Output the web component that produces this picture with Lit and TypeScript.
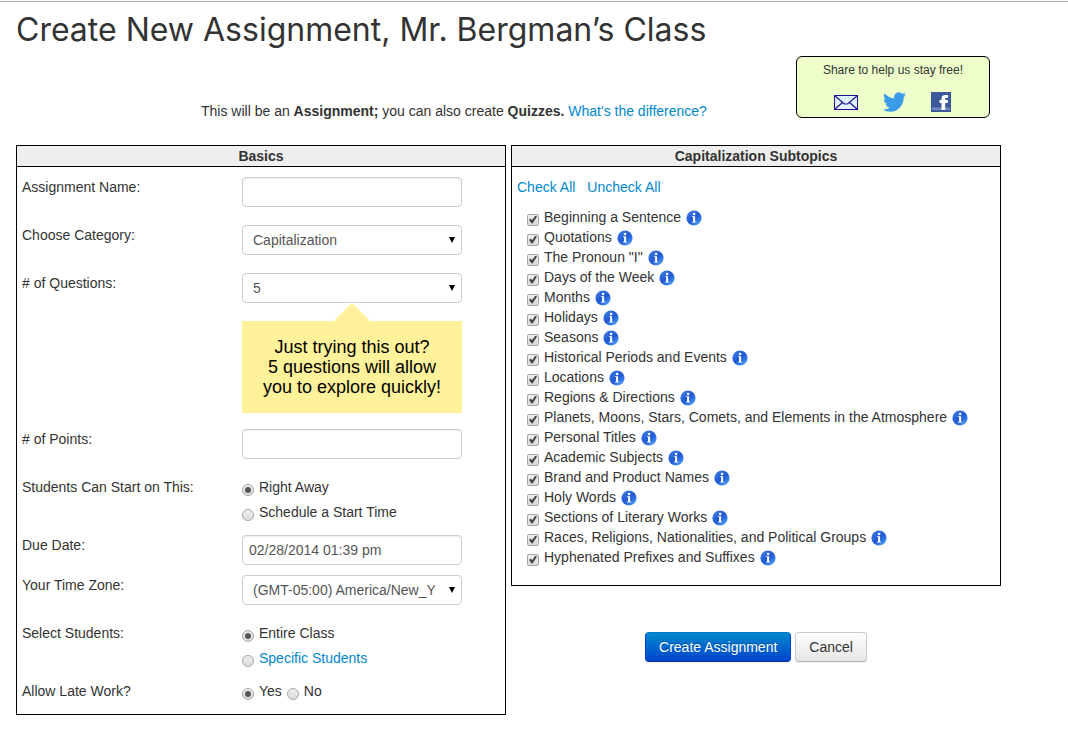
import { LitElement, html, css } from "lit";
import { customElement, property, state } from "lit/decorators.js";

const SUBTOPICS = [
  "Beginning a Sentence",
  "Quotations",
  'The Pronoun "I"',
  "Days of the Week",
  "Months",
  "Holidays",
  "Seasons",
  "Historical Periods and Events",
  "Locations",
  "Regions & Directions",
  "Planets, Moons, Stars, Comets, and Elements in the Atmosphere",
  "Personal Titles",
  "Academic Subjects",
  "Brand and Product Names",
  "Holy Words",
  "Sections of Literary Works",
  "Races, Religions, Nationalities, and Political Groups",
  "Hyphenated Prefixes and Suffixes",
];

const shared = css`
  *,
  *::before,
  *::after {
    box-sizing: border-box;
  }
  a {
    color: #0088cc;
    text-decoration: none;
  }
  svg {
    display: block;
    flex: none;
  }
  input[type="radio"],
  input[type="checkbox"] {
    appearance: none;
    flex: none;
    width: 12px;
    height: 12px;
    margin: 5px 0 0;
    border: 1px solid #a6a6a6;
    background: linear-gradient(#eeeeee, #dcdcdc);
    display: grid;
    place-items: center;
  }
  input[type="radio"] {
    border-radius: 50%;
  }
  input[type="checkbox"] {
    border-radius: 2px;
  }
  input[type="radio"]:checked::before {
    content: "";
    width: 6px;
    height: 6px;
    border-radius: 50%;
    background: #555;
  }
  input[type="checkbox"]:checked::before {
    content: "";
    width: 8px;
    height: 8px;
    background: #444;
    clip-path: polygon(0 55%, 20% 38%, 38% 58%, 80% 0, 100% 14%, 44% 100%, 34% 100%);
  }
`;

@customElement("info-icon")
class InfoIcon extends LitElement {
  static styles = css`
    :host {
      display: block;
      flex: none;
      padding-top: 2px;
    }
    svg {
      display: block;
    }
  `;
  render() {
    return html`<svg width="16" height="16" viewBox="0 0 16 16" aria-hidden="true">
      <defs>
        <linearGradient id="g" x1="0.1" y1="0" x2="0.9" y2="1">
          <stop offset="0" stop-color="#3f7fe6" />
          <stop offset="0.5" stop-color="#2259d2" />
          <stop offset="0.7" stop-color="#2f74e4" />
          <stop offset="1" stop-color="#62b4fb" />
        </linearGradient>
      </defs>
      <circle cx="8" cy="8" r="7.6" fill="url(#g)" />
      <circle cx="8.1" cy="4" r="1.300" fill="#fff" />
      <path d="M6 6.3h3.1v5.400h1.100v.8H6v-.8h1.100V7.100H6z" fill="#fff" />
    </svg>`;
  }
}

@customElement("share-box")
class ShareBox extends LitElement {
  static styles = [
    shared,
    css`
      :host {
        display: block;
        border: 1px solid #000;
        border-radius: 6px;
        background: #eeffcc;
        padding: 3px 26px 5px;
        text-align: center;
      }
      .caption {
        font-size: 12px;
        line-height: 20px;
      }
      .icons {
        display: flex;
        justify-content: center;
        align-items: center;
        gap: 25px;
        padding-top: 12px;
      }
    `,
  ];
  render() {
    return html`
      <div class="caption">Share to help us stay free!</div>
      <div class="icons">
        <a href="#email" aria-label="Email">
          <svg width="24" height="20" viewBox="0 0 24 20">
            <rect x="0.5" y="3.5" width="23" height="14" fill="#dff3ff" stroke="#20109a" />
            <path
              d="M1 4l9.500 8h3L23 4M1 17l7.500-6.500M23 17l-7.500-6.500"
              fill="none"
              stroke="#20109a"
              stroke-width="1.200"
            />
          </svg>
        </a>
        <a href="#twitter" aria-label="Twitter">
          <svg width="23" height="20" viewBox="0 2 24 20" preserveAspectRatio="none">
            <path
              fill="#3b9be8"
              d="M23.953 4.570a10 10 0 01-2.825.775 4.958 4.958 0 002.163-2.723c-.951.555-2.005.959-3.127 1.184a4.920 4.920 0 00-8.384 4.482C7.690 8.095 4.067 6.130 1.640 3.162a4.822 4.822 0 00-.666 2.475c0 1.710.870 3.213 2.188 4.096a4.904 4.904 0 01-2.228-.616v.060a4.923 4.923 0 003.946 4.827 4.996 4.996 0 01-2.212.085 4.936 4.936 0 004.604 3.417 9.867 9.867 0 01-6.102 2.105c-.390 0-.779-.023-1.170-.067a13.995 13.995 0 007.557 2.209c9.053 0 13.998-7.496 13.998-13.985 0-.210 0-.420-.015-.630A9.935 9.935 0 0024 4.590z"
            />
          </svg>
        </a>
        <a href="#facebook" aria-label="Facebook">
          <svg width="20" height="20" viewBox="0 0 20 20">
            <rect width="20" height="20" fill="#3b5998" />
            <rect x="1" y="15.500" width="18" height="2.500" fill="#7189ba" />
            <path
              fill="#fff"
              d="M10.500 18v-7H8.500V8h2V6.500C10.500 4 12 3 14.200 3H17v3h-1.600c-.9 0-1.200.4-1.200 1.100V8H17l-.4 3h-2.400v7z"
            />
          </svg>
        </a>
      </div>
    `;
  }
}

@customElement("titled-panel")
class TitledPanel extends LitElement {
  @property() heading = "";
  static styles = css`
    :host {
      display: block;
      border: 1px solid #000;
    }
    h2 {
      margin: 0;
      font-size: 14px;
      line-height: 20px;
      text-align: center;
      background: #eee;
      border-bottom: 1px solid #000;
    }
  `;
  render() {
    return html`<h2>${this.heading}</h2>
      <slot></slot>`;
  }
}

@customElement("app-root")
class AppRoot extends LitElement {
  @state() private checked: boolean[] = SUBTOPICS.map(() => true);

  static styles = [
    shared,
    css`
      :host {
        display: block;
        font: 14px/20px "Liberation Sans", Arial, sans-serif;
        color: #333;
        background: #fff;
        padding-top: 1px;
      }
      .page {
        border-top: 1px solid #aaa;
        padding: 8px 16px 32px;
      }
      .content {
        max-width: 985px;
      }
      h1 {
        margin: 0 0 6px;
        font: 400 32px/40px Inter, "Liberation Sans", sans-serif;
      }
      .intro-row {
        display: flex;
        align-items: flex-start;
        padding-right: 11px;
        margin-bottom: 24px;
      }
      .intro {
        flex: 1;
        margin: 45px 0 0;
        padding-left: 96px;
        text-align: center;
      }
      .panels {
        display: grid;
        grid-template-columns: 1fr 1fr;
        gap: 5px;
        align-items: start;
      }
      .form {
        padding: 10px 5px 0;
      }
      .row {
        display: grid;
        grid-template-columns: 220px minmax(0, 220px);
        padding-bottom: 8px;
      }
      .row.tight {
        padding-bottom: 0;
      }
      .field {
        display: block;
        width: 100%;
        height: 30px;
        margin: 0 0 10px;
        border: 1px solid #ccc;
        border-radius: 4px;
        background-color: #fff;
        color: #555;
        font: inherit;
      }
      input.field {
        padding: 0 6px;
        box-shadow: inset 0 1px 1px rgba(0, 0, 0, 0.075);
      }
      select.field {
        appearance: none;
        padding: 0 26px 0 10px;
        background-image: url("data:image/svg+xml,%3Csvg xmlns='http://www.w3.org/2000/svg' width='6' height='6'%3E%3Cpath d='M0 0h6L3 6z'/%3E%3C/svg%3E");
        background-repeat: no-repeat;
        background-position: right 6px center;
      }
      .callout {
        margin: 18px 0 8px;
        padding: 16px 8px;
        background: #fff29b;
        color: #000;
        font-size: 18px;
        text-align: center;
        position: relative;
      }
      .callout::before {
        content: "";
        position: absolute;
        left: 50%;
        bottom: 100%;
        margin-left: -18px;
        border: 18px solid transparent;
        border-top-width: 0;
        border-bottom-color: #fff29b;
      }
      .choices {
        display: flex;
        flex-direction: column;
      }
      .choices.inline {
        flex-direction: row;
        gap: 5px;
      }
      .choice {
        display: flex;
        align-items: center;
        gap: 5px;
        margin-bottom: 5px;
      }
      .bulk {
        display: flex;
        gap: 12px;
        padding: 10px 5px;
      }
      .topics {
        list-style: none;
        margin: 0;
        padding: 0 15px 18px;
      }
      .topic {
        display: flex;
        align-items: center;
        gap: 5px;
      }
      .topic label {
        display: flex;
        align-items: center;
        gap: 5px;
      }
      .actions {
        display: flex;
        justify-content: center;
        gap: 4px;
        margin-top: 46px;
      }
      .btn {
        height: 30px;
        padding: 0 13px;
        border: 1px solid #ccc;
        border-bottom-color: #b3b3b3;
        border-radius: 4px;
        background: linear-gradient(#fff, #e6e6e6);
        color: #333;
        font: inherit;
        box-shadow: 0 1px 2px rgba(0, 0, 0, 0.05);
      }
      .btn.primary {
        border-color: #0077cc #0044cc #003399;
        background: linear-gradient(#0088cc, #0044cc);
        color: #fff;
        text-shadow: 0 -1px 0 rgba(0, 0, 0, 0.25);
      }
    `,
  ];

  private setAll(e: Event, value: boolean) {
    e.preventDefault();
    this.checked = SUBTOPICS.map(() => value);
  }

  private toggle(i: number) {
    this.checked = this.checked.map((c, n) => (n === i ? !c : c));
  }

  render() {
    return html`
      <div class="page">
        <div class="content">
          <h1>Create New Assignment, Mr. Bergman’s Class</h1>
          <div class="intro-row">
            <p class="intro">
              This will be an <b>Assignment;</b> you can also create <b>Quizzes.</b>
              <a href="#difference">What's the difference?</a>
            </p>
            <share-box></share-box>
          </div>
          <div class="panels">
            <titled-panel heading="Basics">
              <div class="form">
                <div class="row">
                  <label for="name">Assignment Name:</label>
                  <input class="field" id="name" type="text" />
                </div>
                <div class="row">
                  <label for="category">Choose Category:</label>
                  <select class="field" id="category">
                    <option>Capitalization</option>
                  </select>
                </div>
                <div class="row">
                  <label for="questions"># of Questions:</label>
                  <div>
                    <select class="field" id="questions">
                      <option>5</option>
                    </select>
                    <div class="callout">
                      Just trying this out?<br />5 questions will allow<br />you to explore quickly!
                    </div>
                  </div>
                </div>
                <div class="row">
                  <label for="points"># of Points:</label>
                  <input class="field" id="points" type="text" />
                </div>
                <div class="row">
                  <span id="start-label">Students Can Start on This:</span>
                  <div class="choices" role="radiogroup" aria-labelledby="start-label">
                    <label class="choice"><input type="radio" name="start" checked />Right Away</label>
                    <label class="choice"><input type="radio" name="start" />Schedule a Start Time</label>
                  </div>
                </div>
                <div class="row tight">
                  <label for="due">Due Date:</label>
                  <input class="field" id="due" type="text" value="02/28/2014 01:39 pm" />
                </div>
                <div class="row">
                  <label for="zone">Your Time Zone:</label>
                  <select class="field" id="zone">
                    <option>(GMT-05:00) America/New_York</option>
                  </select>
                </div>
                <div class="row">
                  <span id="students-label">Select Students:</span>
                  <div class="choices" role="radiogroup" aria-labelledby="students-label">
                    <label class="choice"><input type="radio" name="students" checked />Entire Class</label>
                    <label class="choice"
                      ><input type="radio" name="students" /><a href="#students">Specific Students</a></label
                    >
                  </div>
                </div>
                <div class="row">
                  <span id="late-label">Allow Late Work?</span>
                  <div class="choices inline" role="radiogroup" aria-labelledby="late-label">
                    <label class="choice"><input type="radio" name="late" checked />Yes</label>
                    <label class="choice"><input type="radio" name="late" />No</label>
                  </div>
                </div>
              </div>
            </titled-panel>
            <div>
              <titled-panel heading="Capitalization Subtopics">
                <div class="bulk">
                  <a href="#check" @click=${(e: Event) => this.setAll(e, true)}>Check All</a>
                  <a href="#uncheck" @click=${(e: Event) => this.setAll(e, false)}>Uncheck All</a>
                </div>
                <ul class="topics">
                  ${SUBTOPICS.map(
                    (topic, i) => html`<li class="topic">
                      <label
                        ><input
                          type="checkbox"
                          .checked=${this.checked[i]}
                          @change=${() => this.toggle(i)}
                        />${topic}</label
                      >
                      <info-icon></info-icon>
                    </li>`
                  )}
                </ul>
              </titled-panel>
              <div class="actions">
                <button class="btn primary" type="button">Create Assignment</button>
                <button class="btn" type="button">Cancel</button>
              </div>
            </div>
          </div>
        </div>
      </div>
    `;
  }
}
